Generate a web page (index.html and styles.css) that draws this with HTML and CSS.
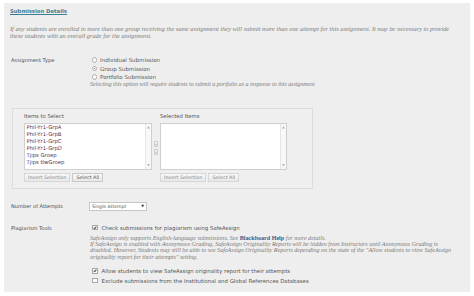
FILE: index.html
```html
<!DOCTYPE html>
<html>
<head>
<meta charset="utf-8">
<link rel="stylesheet" href="styles.css">
</head>
<body>
<div class="page">
  <div class="panel">
    <h2 class="heading">Submission Details</h2>
    <p class="desc">If any students are enrolled in more than one group receiving the same assignment they will submit more than one attempt for this assignment. It may be necessary to provide<br>these students with an overall grade for the assignment.</p>

    <div class="row type-row">
      <div class="label">Assignment Type</div>
      <div class="field">
        <div class="opt"><span class="radio"></span>Individual Submission</div>
        <div class="opt"><span class="radio on"></span>Group Submission</div>
        <div class="opt"><span class="radio"></span>Portfolio Submission</div>
        <div class="note">Selecting this option will require students to submit a portfolio as a response to this assignment</div>
      </div>
    </div>

    <div class="picker">
      <div class="pick-col">
        <div class="pick-title">Items to Select</div>
        <div class="listbox">
          <div class="items">
            <div class="item">Phil-Yr1-GrpA</div>
            <div class="item">Phil-Yr1-GrpB</div>
            <div class="item">Phil-Yr1-GrpC</div>
            <div class="item">Phil-Yr1-GrpD</div>
            <div class="item">Tjips Groep</div>
            <div class="item">Tjips tlwGroep</div>
          </div>
          <div class="scroll"><span class="up">&#9650;</span><span class="down">&#9660;</span></div>
        </div>
        <div class="btns">
          <span class="btn dim">Invert Selection</span>
          <span class="btn">Select All</span>
        </div>
      </div>
      <div class="arrows">
        <span class="arrow">&#8250;</span>
        <span class="arrow">&#8249;</span>
      </div>
      <div class="pick-col right">
        <div class="pick-title">Selected Items</div>
        <div class="listbox">
          <div class="items"></div>
          <div class="scroll"><span class="up">&#9650;</span><span class="down">&#9660;</span></div>
        </div>
        <div class="btns">
          <span class="btn dim">Invert Selection</span>
          <span class="btn dim">Select All</span>
        </div>
      </div>
    </div>

    <div class="row attempts">
      <div class="label">Number of Attempts</div>
      <div class="field">
        <div class="select"><span>Single Attempt</span><span class="caret">&#9660;</span></div>
      </div>
    </div>

    <div class="row plag">
      <div class="label">Plagiarism Tools</div>
      <div class="field">
        <div class="chk-line"><span class="check on"></span>Check submissions for plagiarism using SafeAssign</div>
        <div class="plag-note">SafeAssign only supports English-language submissions. See <span class="link">Blackboard Help</span> for more details.<br>If SafeAssign is enabled with Anonymous Grading, SafeAssign Originality Reports will be hidden from Instructors until Anonymous Grading is<br>disabled. However, Students may still be able to see SafeAssign Originality Reports depending on the state of the "Allow students to view SafeAssign<br>originality report for their attempts" setting.</div>
        <div class="chk-line gap"><span class="check on"></span>Allow students to view SafeAssign originality report for their attempts</div>
        <div class="chk-line"><span class="check"></span>Exclude submissions from the Institutional and Global References Databases</div>
      </div>
    </div>
  </div>
</div>
</body>
</html>
```

FILE: styles.css
```css
html, body {
  margin: 0;
  padding: 0;
  background: #ffffff;
}
body {
  font-family: "DejaVu Sans", Verdana, sans-serif;
  font-size: 5.3px;
  color: #4a4a4a;
}
.page {
  padding: 3px 4px 0 4px;
}
.panel {
  background: #eeeeee;
  width: 466px;
  height: 289px;
  box-sizing: border-box;
  padding: 5px 6px 0 6px;
}
.heading {
  margin: 0;
  font-size: 5.3px;
  line-height: 7px;
  font-weight: bold;
  color: #3a7f96;
  text-decoration: underline;
}
.desc {
  margin: 9.5px 0 0 0;
  font-family: "Liberation Serif", "Times New Roman", serif;
  font-style: italic;
  font-size: 6.34px;
  line-height: 7px;
  color: #7a7a7a;
  white-space: nowrap;
}
.row {
  display: grid;
  grid-template-columns: 79px 1fr;
  padding-left: 1px;
}
.label {
  font-size: 5.1px;
  color: #4a4a4a;
}
.type-row {
  margin-top: 17.25px;
}
.type-row .label {
  line-height: 8.5px;
}
.opt {
  display: flex;
  align-items: center;
  height: 8.5px;
  padding-left: 2px;
  font-size: 5.5px;
  color: #5a5a5a;
}
.radio {
  width: 3.3px;
  height: 3.3px;
  border: 0.6px solid #b0b0b0;
  border-radius: 50%;
  background: #fafafa;
  margin-right: 2.8px;
  display: inline-flex;
  align-items: center;
  justify-content: center;
  flex: none;
}
.radio.on::after {
  content: "";
  width: 1.6px;
  height: 1.6px;
  border-radius: 50%;
  background: #666;
}
.note {
  font-family: "Liberation Serif", "Times New Roman", serif;
  font-style: italic;
  font-size: 5.9px;
  line-height: 7px;
  color: #7a7a7a;
  white-space: nowrap;
}
.picker {
  margin: 19.75px 0 0 2px;
  width: 301px;
  height: 81px;
  box-sizing: border-box;
  border: 1px solid #dcdcdc;
  background: #efefef;
  padding: 4px 0 0 11px;
  display: flex;
  align-items: flex-start;
}
.pick-col {
  width: 128px;
  display: flex;
  flex-direction: column;
}
.pick-col.right {
  width: 127px;
}
.pick-title {
  line-height: 7px;
  height: 7px;
  margin-bottom: 2.5px;
  color: #555;
}
.listbox {
  height: 47px;
  box-sizing: border-box;
  border: 1px solid #cfcfcf;
  background: #ffffff;
  display: flex;
}
.items {
  flex: 1;
  padding: 0 0 0 1.5px;
}
.item {
  line-height: 7px;
  color: #4b3a5c;
  white-space: nowrap;
}
.scroll {
  width: 6px;
  flex: none;
  border-left: 1px solid #e6e6e6;
  background: #f8f8f8;
  display: flex;
  flex-direction: column;
  justify-content: space-between;
  align-items: center;
  font-size: 3px;
  color: #aaa;
  padding: 1.5px 0;
  box-sizing: border-box;
}
.btns {
  display: flex;
  gap: 2px;
  margin-top: 3px;
}
.btn {
  height: 9px;
  line-height: 7px;
  box-sizing: border-box;
  border: 1px solid #c8c8c8;
  background: linear-gradient(#f8f8f8, #e8e8e8);
  padding: 0 3px;
  font-size: 4.9px;
  color: #555;
  white-space: nowrap;
}
.btn.dim {
  color: #8a8a8a;
  border-color: #d6d6d6;
}
.arrows {
  width: 8px;
  align-self: stretch;
  display: flex;
  flex-direction: column;
  align-items: center;
  justify-content: center;
  gap: 1.5px;
  padding-top: 9px;
  padding-bottom: 14px;
  box-sizing: border-box;
}
.arrow {
  width: 4.5px;
  height: 6px;
  box-sizing: border-box;
  border: 0.6px solid #cfcfcf;
  background: #f6f6f6;
  font-size: 5px;
  line-height: 5px;
  text-align: center;
  color: #666;
}
.attempts {
  margin-top: 12.5px;
}
.attempts .label {
  line-height: 9px;
}
.select {
  width: 58px;
  height: 9px;
  box-sizing: border-box;
  border: 1px solid #c6c6c6;
  background: #ffffff;
  display: flex;
  align-items: center;
  justify-content: space-between;
  padding: 0 2px 0 2px;
  font-size: 4.6px;
  color: #555;
  margin-left: -1px;
}
.caret {
  font-size: 3.6px;
  color: #333;
}
.plag {
  margin-top: 13px;
}
.plag .label {
  line-height: 8px;
}
.chk-line {
  display: flex;
  align-items: center;
  height: 8px;
  padding-left: 2px;
  font-size: 5.4px;
  color: #555;
  white-space: nowrap;
}
.chk-line.gap {
  margin-top: 6px;
  height: 9.7px;
}
.chk-line.gap + .chk-line {
  height: 9.7px;
}
.check {
  width: 3.6px;
  height: 3.6px;
  border: 0.6px solid #a8a8a8;
  background: #fafafa;
  margin-right: 4px;
  flex: none;
  position: relative;
}
.check.on::after {
  content: "";
  position: absolute;
  left: 0.9px;
  top: 0.1px;
  width: 1px;
  height: 2px;
  border-right: 0.7px solid #555;
  border-bottom: 0.7px solid #555;
  transform: rotate(40deg);
}
.plag-note {
  margin-top: 3.3px;
  font-family: "Liberation Serif", "Times New Roman", serif;
  font-style: italic;
  font-size: 6.08px;
  line-height: 6.3px;
  color: #7a7a7a;
  white-space: nowrap;
}
.link {
  font-style: normal;
  font-weight: bold;
  color: #2f5f8e;
}
```
